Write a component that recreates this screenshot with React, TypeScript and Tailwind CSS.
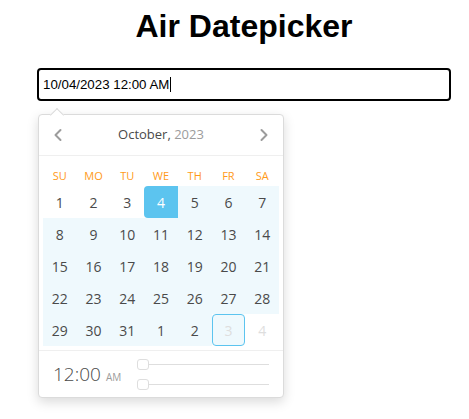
import React from 'react';

type Cell = {
  label: number;
  kind: 'normal' | 'selected' | 'range' | 'focus' | 'muted';
};

const DAY_NAMES = ['SU', 'MO', 'TU', 'WE', 'TH', 'FR', 'SA'];

// October 2023 starts on a Sunday; trailing cells are November 1–4.
function buildCells(): Cell[] {
  const cells: Cell[] = [];
  for (let d = 1; d <= 31; d++) {
    cells.push({ label: d, kind: d < 4 ? 'normal' : d === 4 ? 'selected' : 'range' });
  }
  cells.push({ label: 1, kind: 'range' });
  cells.push({ label: 2, kind: 'range' });
  cells.push({ label: 3, kind: 'focus' });
  cells.push({ label: 4, kind: 'muted' });
  return cells;
}

function cellClass(kind: Cell['kind']): string {
  switch (kind) {
    case 'selected':
      return 'bg-[#5cc4ef] text-white rounded-l-[4px]';
    case 'range':
      return 'bg-[#eff9fd] text-[#4a4a4a]';
    case 'focus':
      return 'bg-[#eff9fd] text-[#dedede] border border-[#5cc4ef] rounded-[4px]';
    case 'muted':
      return 'text-[#dedede]';
    default:
      return 'text-[#4a4a4a]';
  }
}

function Chevron({ dir }: { dir: 'left' | 'right' }) {
  return (
    <svg width="32" height="32" viewBox="0 0 32 32" fill="none">
      <path
        d={dir === 'left' ? 'M17.5 11l-5 5 5 5' : 'M14.5 11l5 5-5 5'}
        stroke="#9c9c9c"
        strokeWidth="2"
        strokeLinecap="round"
        strokeLinejoin="round"
      />
    </svg>
  );
}

function Slider() {
  return (
    <div className="relative flex h-[11px] items-center">
      <div className="h-px w-full bg-[#dedede]" />
      <div className="absolute left-0 top-0 h-[11px] w-[12px] rounded-[3px] border border-[#dedede] bg-white" />
    </div>
  );
}

export default function App() {
  const cells = buildCells();

  return (
    <div className="min-h-[419px] bg-white">
      <div className="ml-[37px] w-[414px] pt-[8px]">
        <h1
          className="text-center text-[32px] font-bold leading-[37px] text-black"
          style={{ fontFamily: '"Liberation Sans", Arial, sans-serif' }}
        >
          Air Datepicker
        </h1>

        <div
          className="mt-[23px] flex h-[33px] items-center rounded-[4px] border-2 border-black px-[4px] text-[13.3px] text-black"
          style={{ fontFamily: '"Liberation Sans", Arial, sans-serif' }}
        >
          <span>10/04/2023 12:00 AM</span>
          <span className="ml-px inline-block h-[15px] w-px bg-black" />
        </div>

        <div
          className="relative ml-px mt-[13px] w-[246px] rounded-[4px] border border-[#dbdbdb] bg-white shadow-[0_4px_12px_rgba(0,0,0,0.15)]"
          style={{ fontFamily: '"Open Sans", "Noto Sans", sans-serif' }}
        >
          <div className="absolute -top-[5px] left-[13px] h-[10px] w-[10px] rotate-45 border-l border-t border-[#dbdbdb] bg-white" />

          <div className="relative flex h-[41px] items-center justify-between border-b border-[#efefef] px-[4px]">
            <button className="flex h-[32px] w-[32px] items-center justify-center">
              <Chevron dir="left" />
            </button>
            <div className="text-[13px] text-[#4a4a4a]">
              October, <span className="text-[#9c9c9c]">2023</span>
            </div>
            <button className="flex h-[32px] w-[32px] items-center justify-center">
              <Chevron dir="right" />
            </button>
          </div>

          <div className="px-[4px] pb-[4px] pt-[4px]">
            <div className="mb-[2px] mt-[8px] grid grid-cols-7">
              {DAY_NAMES.map((d) => (
                <div
                  key={d}
                  className="flex h-[16px] items-center justify-center text-[11px] text-[#ff9a19]"
                >
                  {d}
                </div>
              ))}
            </div>
            <div className="grid grid-cols-7">
              {cells.map((c, i) => (
                <div
                  key={i}
                  className={`flex h-[32px] items-center justify-center text-[14px] ${cellClass(c.kind)}`}
                >
                  {c.label}
                </div>
              ))}
            </div>
          </div>

          <div className="flex h-[47px] items-center border-t border-[#efefef] pl-[14px] pr-[14px]">
            <div className="flex w-[84px] items-baseline text-[#4a4a4a]">
              <span className="text-[19px] font-light">12:00</span>
              <span className="ml-[5px] text-[10px] text-[#9c9c9c]">AM</span>
            </div>
            <div className="flex flex-1 flex-col gap-[9px]">
              <Slider />
              <Slider />
            </div>
          </div>
        </div>
      </div>
    </div>
  );
}
